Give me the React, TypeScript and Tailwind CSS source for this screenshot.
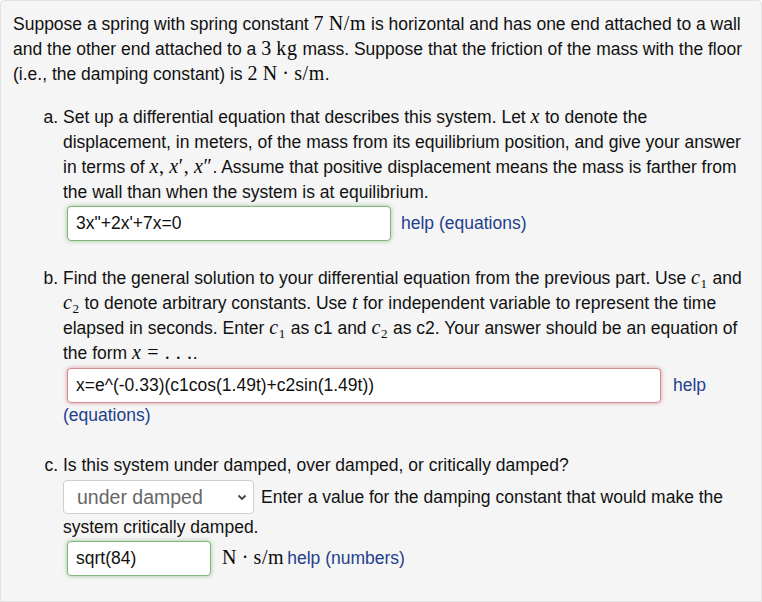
import type { ReactNode } from 'react';

// MathJax-like inline math
function M({ children }: { children: ReactNode }) {
  return (
    <span className="font-['Liberation_Serif','Times_New_Roman',serif] text-[20px] leading-none tracking-[0.6px] text-[#0a0a0a]">
      {children}
    </span>
  );
}

function V({ children }: { children: ReactNode }) {
  return <i className="italic">{children}</i>;
}

function C({ n }: { n: number }) {
  return (
    <M>
      <V>c</V>
      <span className="relative top-[4px] text-[13px] leading-none not-italic">{n}</span>
    </M>
  );
}

function Help({ children }: { children: ReactNode }) {
  return <a className="text-[#22408c] cursor-pointer">{children}</a>;
}

function AnswerInput({ value, width, state }: { value: string; width: string; state: 'ok' | 'bad' }) {
  return (
    <div
      className={
        'ml-1 h-[35px] flex items-center px-2 bg-white rounded text-[17.5px] text-[#111] border ' +
        width +
        (state === 'ok'
          ? ' border-[#7fb77a] shadow-[0_0_4px_rgba(80,160,70,0.55)]'
          : ' border-[#d38a8e] shadow-[0_0_4px_rgba(200,80,90,0.55)]')
      }
    >
      {value}
    </div>
  );
}

export default function App() {
  return (
    <div className="bg-white min-h-[602px] font-['Liberation_Sans',Arial,sans-serif] text-[17.5px] leading-[25px] text-[#111]">
      <div className="min-h-[602px] bg-[#f5f5f5] border border-[#e3e3e3] rounded-t-[4px] pl-3 pr-3 pt-[11px]">
        {/* Intro */}
        <p>
          Suppose a spring with spring constant <M>7&thinsp;N/m</M> is horizontal and has one end attached to a wall
          and the other end attached to a <M>3&thinsp;kg</M> mass. Suppose that the friction of the mass with the floor
          (i.e., the damping constant) is <M>2&thinsp;N&thinsp;·&thinsp;s/m</M>.
        </p>

        <ol className="mt-[18px] pl-[50px] pr-[2px] list-[lower-alpha]">
          {/* a */}
          <li className="mb-[25px]">
            <div>
              Set up a differential equation that describes this system. Let <M><V>x</V></M> to denote the
              displacement, in meters, of the mass from its equilibrium position, and give your answer in terms of{' '}
              <M>
                <V>x</V>,&thinsp;<V>x</V>′,&thinsp;<V>x</V>″
              </M>
              . Assume that positive displacement means the mass is farther from the wall than when the system is at
              equilibrium.
            </div>
            <div className="mt-px flex items-center">
              <AnswerInput value={`3x"+2x'+7x=0`} width="w-[324px]" state="ok" />
              <span className="ml-[10px]">
                <Help>help (equations)</Help>
              </span>
            </div>
          </li>

          {/* b */}
          <li className="mb-[25px]">
            <div>
              Find the general solution to your differential equation from the previous part. Use <C n={1} /> and{' '}
              <C n={2} /> to denote arbitrary constants. Use <M><V>t</V></M> for independent variable to represent the
              time elapsed in seconds. Enter <C n={1} /> as c1 and <C n={2} /> as c2. Your answer should be an equation
              of the form{' '}
              <M>
                <V>x</V> = .&nbsp;.&nbsp;.
              </M>
              .
            </div>
            <div className="mt-[2px] flex items-center">
              <AnswerInput value="x=e^(-0.33)(c1cos(1.49t)+c2sin(1.49t))" width="w-[594px]" state="bad" />
              <span className="ml-[12px]">
                <Help>help</Help>
              </span>
            </div>
            <div>
              <Help>(equations)</Help>
            </div>
          </li>

          {/* c */}
          <li>
            <div>Is this system under damped, over damped, or critically damped?</div>
            <div className="mt-[2px] flex items-center">
              <div className="w-[191px] h-[34px] flex items-center justify-between pl-[13px] pr-[5px] bg-white border border-[#cfcfcf] rounded text-[19.5px] text-[#666]">
                <span>under damped</span>
                <svg width="12" height="12" viewBox="0 0 12 12" fill="none" stroke="#444" strokeWidth="1.8">
                  <path d="M2.5 4.5 L6 8 L9.5 4.5" />
                </svg>
              </div>
              <span className="ml-[7px]">Enter a value for the damping constant that would make the</span>
            </div>
            <div className="mt-px">system critically damped.</div>
            <div className="mt-px flex items-center">
              <AnswerInput value="sqrt(84)" width="w-[144px]" state="ok" />
              <span className="ml-[11px]">
                <M>N&thinsp;·&thinsp;s/m</M>
              </span>
              <span className="ml-[3px]">
                <Help>help (numbers)</Help>
              </span>
            </div>
          </li>
        </ol>
      </div>
    </div>
  );
}
